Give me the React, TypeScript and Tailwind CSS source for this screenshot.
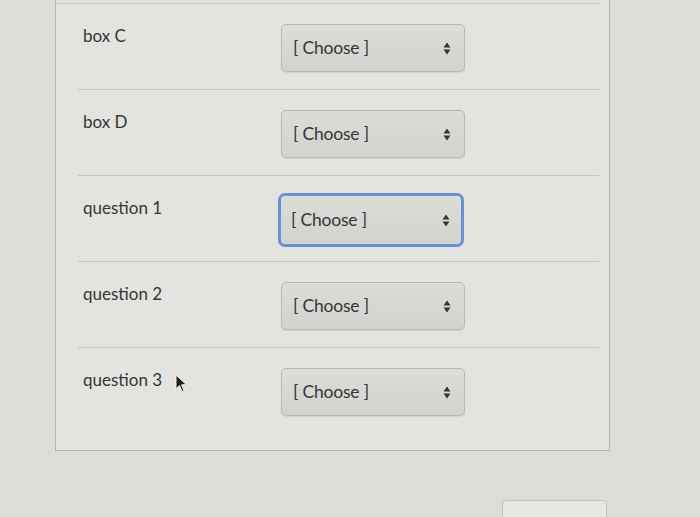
import React from "react";

const rows = ["box C", "box D", "question 1", "question 2", "question 3"];

function Arrows() {
  return (
    <svg width="8" height="13" viewBox="0 0 8 13" className="shrink-0">
      <path d="M4 0.5 L7.5 5.5 L0.5 5.5 Z" fill="#363636" />
      <path d="M4 12.5 L7.5 7.5 L0.5 7.5 Z" fill="#363636" />
    </svg>
  );
}

function Select({ focused }: { focused?: boolean }) {
  return (
    <div
      className={
        focused
          ? "w-[186px] h-[54px] rounded-[7px] border-[3px] border-[#6d8fd8] bg-gradient-to-b from-[#dcdcd8] to-[#d2d2ce] flex items-center justify-between pl-[10px] pr-[11px] -ml-[3px] -mt-[3px]"
          : "w-[184px] h-[48px] rounded-[5px] border border-[#b9b9b5] bg-gradient-to-b from-[#dcdcd8] to-[#d2d2ce] shadow-[0_1px_1px_rgba(0,0,0,0.08)] flex items-center justify-between pl-[11px] pr-[13px]"
      }
    >
      <span className="text-[17.5px] text-[#363636] tracking-[-0.2px]">[ Choose ]</span>
      <Arrows />
    </div>
  );
}

export default function App() {
  return (
    <div
      className="relative w-[700px] h-[517px] overflow-hidden bg-[#dcdcd8]"
      style={{ fontFamily: "Lato, 'Open Sans', sans-serif" }}
    >
      <div className="ml-[55px] w-[555px] h-[451px] border-l border-r border-b border-[#b4b4b0] bg-[#e3e3df] flex flex-col">
        <div className="mt-[3px] mr-[10px] h-px bg-[#c4c4c0]" />
        {rows.map((label, i) => (
          <div key={label} className="flex flex-col">
            <div className="flex h-[85px] items-start pt-[20px]">
              <div className="w-[225px] pl-[27px] -mt-[1px] text-[17px] leading-[25px] text-[#363636]">{label}</div>
              <Select focused={i === 2} />
            </div>
            {i < rows.length - 1 && <div className="ml-[22px] mr-[10px] h-px bg-[#c6c6c2]" />}
          </div>
        ))}
      </div>
      <div className="flex justify-end pr-[93px] pt-[49px]">
        <div className="w-[105px] h-[30px] rounded-[4px] border border-[#c2c2be] bg-[#e6e6e2]" />
      </div>
      <svg
        className="absolute left-[175px] top-[374px]"
        width="14"
        height="20"
        viewBox="0 0 14 20"
      >
        <path d="M1 1 L1 15 L4.5 11.5 L7 17.5 L9 16.6 L6.6 10.8 L11.5 10.8 Z" fill="#1e1e1e" stroke="#f4f4f4" strokeWidth="1" />
      </svg>
    </div>
  );
}
